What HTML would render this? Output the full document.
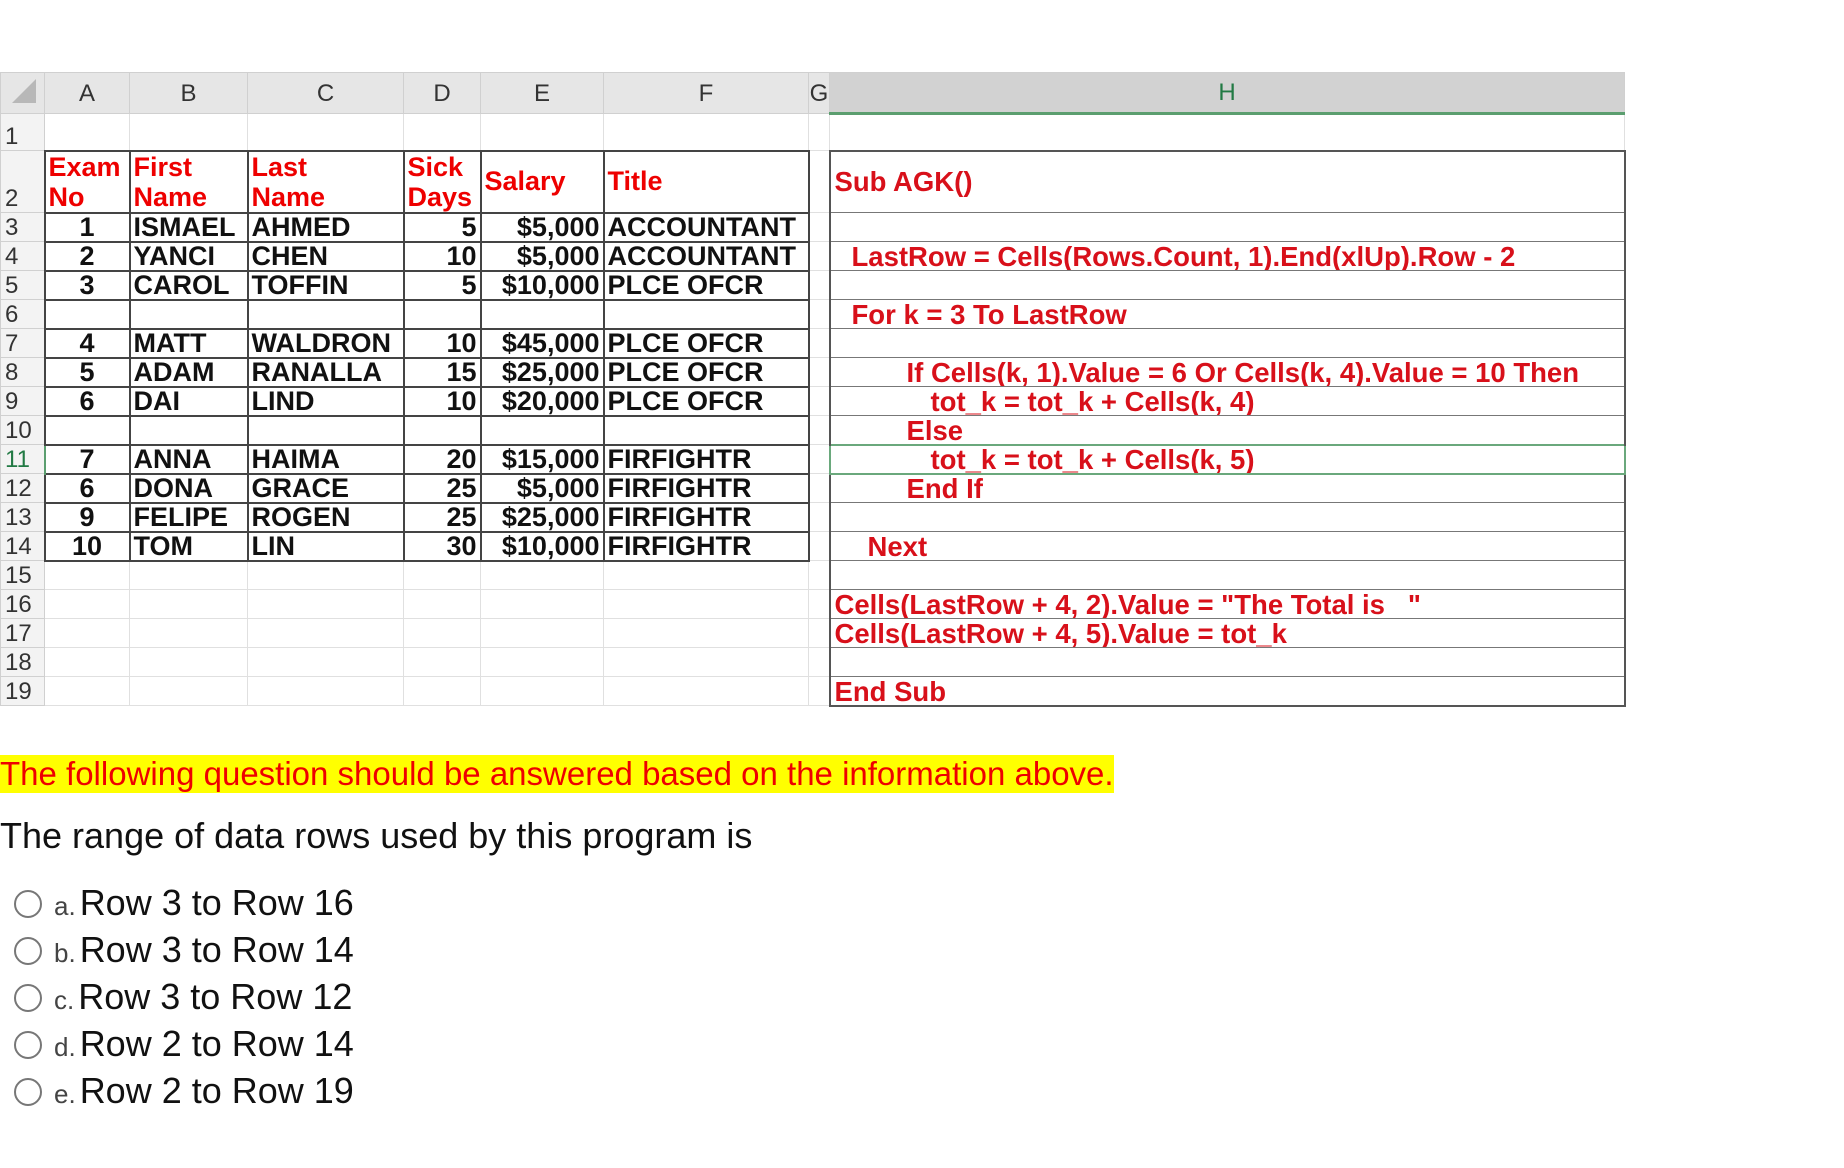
<!DOCTYPE html>
<html><head><meta charset="utf-8"><style>
body{margin:0;width:1844px;height:1168px;background:#fff;overflow:hidden;font-family:"Liberation Sans",Arial,sans-serif;position:relative}
table{position:absolute;left:0;top:72px;border-collapse:collapse;table-layout:fixed}
td{padding:0 3px;border:1px solid #e0e0e0;font-weight:bold;font-size:27px;color:#111;white-space:nowrap;overflow:hidden;vertical-align:bottom;line-height:27px}
tr.hd td{background:#e6e6e6;font-weight:normal;font-size:24px;color:#333;text-align:center;vertical-align:middle;border-color:#d0d0d0}
td.rh{background:#f3f3f3;font-weight:normal;font-size:24px;color:#333;text-align:left;padding-left:4px;border-color:#d0d0d0}
.d{border:2px solid #444}
.r{color:#e00;}
.c{text-align:center}.rt{text-align:right}
.h{border-left:2px solid #555;border-right:2px solid #555;border-top:1px solid #777;border-bottom:1px solid #777;color:#d8101a;font-size:27.5px}
.hdH{background:#d2d2d2 !important;color:#227a44 !important;border-bottom:3px solid #5b9e6f !important}
.o{height:47px;line-height:47px}
.rb{display:inline-block;width:24px;height:24px;border:2px solid #777;border-radius:50%;vertical-align:-3px;margin-right:12px}
.l{font-size:26px;color:#444;margin-right:4px}
</style></head><body>
<table>
<colgroup><col style="width:44px"><col style="width:85px"><col style="width:118px"><col style="width:156px"><col style="width:77px"><col style="width:123px"><col style="width:205px"><col style="width:21px"><col style="width:795px"></colgroup>
<tr class="hd" style="height:41px"><td style="background:#e6e6e6"><svg width="30" height="30"><polygon points="28,4 28,28 4,28" fill="#b8b8b8"/></svg></td><td>A</td><td>B</td><td>C</td><td>D</td><td>E</td><td>F</td><td style="padding:0">G</td><td class="hdH">H</td></tr>
<tr style="height:37px"><td class="rh">1</td><td></td><td></td><td></td><td></td><td></td><td></td><td></td><td></td></tr>
<tr style="height:62px"><td class="rh">2</td><td class="d r" style="line-height:30px">Exam<br>No</td><td class="d r" style="line-height:30px">First<br>Name</td><td class="d r" style="line-height:30px">Last<br>Name</td><td class="d r" style="line-height:30px">Sick<br>Days</td><td class="d r" style="vertical-align:middle">Salary</td><td class="d r" style="vertical-align:middle">Title</td><td></td><td class="h" style="border-top:2px solid #555;vertical-align:middle;padding-left:4px">Sub AGK()</td></tr>
<tr style="height:29px"><td class="rh">3</td><td class="d c">1</td><td class="d">ISMAEL</td><td class="d">AHMED</td><td class="d rt">5</td><td class="d rt">$5,000</td><td class="d">ACCOUNTANT</td><td></td><td class="h"></td></tr>
<tr style="height:29px"><td class="rh">4</td><td class="d c">2</td><td class="d">YANCI</td><td class="d">CHEN</td><td class="d rt">10</td><td class="d rt">$5,000</td><td class="d">ACCOUNTANT</td><td></td><td class="h" style="padding-left:21px">LastRow = Cells(Rows.Count, 1).End(xlUp).Row - 2</td></tr>
<tr style="height:29px"><td class="rh">5</td><td class="d c">3</td><td class="d">CAROL</td><td class="d">TOFFIN</td><td class="d rt">5</td><td class="d rt">$10,000</td><td class="d">PLCE OFCR</td><td></td><td class="h"></td></tr>
<tr style="height:29px"><td class="rh">6</td><td class="d"></td><td class="d"></td><td class="d"></td><td class="d"></td><td class="d"></td><td class="d"></td><td></td><td class="h" style="padding-left:21px">For k = 3 To LastRow</td></tr>
<tr style="height:29px"><td class="rh">7</td><td class="d c">4</td><td class="d">MATT</td><td class="d">WALDRON</td><td class="d rt">10</td><td class="d rt">$45,000</td><td class="d">PLCE OFCR</td><td></td><td class="h"></td></tr>
<tr style="height:29px"><td class="rh">8</td><td class="d c">5</td><td class="d">ADAM</td><td class="d">RANALLA</td><td class="d rt">15</td><td class="d rt">$25,000</td><td class="d">PLCE OFCR</td><td></td><td class="h" style="padding-left:76px">If Cells(k, 1).Value = 6 Or Cells(k, 4).Value = 10 Then</td></tr>
<tr style="height:29px"><td class="rh">9</td><td class="d c">6</td><td class="d">DAI</td><td class="d">LIND</td><td class="d rt">10</td><td class="d rt">$20,000</td><td class="d">PLCE OFCR</td><td></td><td class="h" style="padding-left:100px">tot_k = tot_k + Cells(k, 4)</td></tr>
<tr style="height:29px"><td class="rh">10</td><td class="d"></td><td class="d"></td><td class="d"></td><td class="d"></td><td class="d"></td><td class="d"></td><td></td><td class="h" style="padding-left:76px">Else</td></tr>
<tr style="height:29px"><td class="rh" style="color:#227a44;border-right:2px solid #5b9e6f">11</td><td class="d c">7</td><td class="d">ANNA</td><td class="d">HAIMA</td><td class="d rt">20</td><td class="d rt">$15,000</td><td class="d">FIRFIGHTR</td><td></td><td class="h" style="padding-left:100px;border:2px solid #6aa87c">tot_k = tot_k + Cells(k, 5)</td></tr>
<tr style="height:29px"><td class="rh">12</td><td class="d c">6</td><td class="d">DONA</td><td class="d">GRACE</td><td class="d rt">25</td><td class="d rt">$5,000</td><td class="d">FIRFIGHTR</td><td></td><td class="h" style="padding-left:76px">End If</td></tr>
<tr style="height:29px"><td class="rh">13</td><td class="d c">9</td><td class="d">FELIPE</td><td class="d">ROGEN</td><td class="d rt">25</td><td class="d rt">$25,000</td><td class="d">FIRFIGHTR</td><td></td><td class="h"></td></tr>
<tr style="height:29px"><td class="rh">14</td><td class="d c">10</td><td class="d">TOM</td><td class="d">LIN</td><td class="d rt">30</td><td class="d rt">$10,000</td><td class="d">FIRFIGHTR</td><td></td><td class="h" style="padding-left:37px">Next</td></tr>
<tr style="height:29px"><td class="rh">15</td><td></td><td></td><td></td><td></td><td></td><td></td><td></td><td class="h"></td></tr>
<tr style="height:29px"><td class="rh">16</td><td></td><td></td><td></td><td></td><td></td><td></td><td></td><td class="h" style="padding-left:4px">Cells(LastRow + 4, 2).Value = "The Total is &nbsp;&nbsp;"</td></tr>
<tr style="height:29px"><td class="rh">17</td><td></td><td></td><td></td><td></td><td></td><td></td><td></td><td class="h" style="padding-left:4px">Cells(LastRow + 4, 5).Value = tot_k</td></tr>
<tr style="height:29px"><td class="rh">18</td><td></td><td></td><td></td><td></td><td></td><td></td><td></td><td class="h"></td></tr>
<tr style="height:29px"><td class="rh">19</td><td></td><td></td><td></td><td></td><td></td><td></td><td></td><td class="h" style="padding-left:4px;border-bottom:2px solid #555">End Sub</td></tr>
</table>
<div style="position:absolute;left:0;top:755px;height:38px;width:1114px;background:#ffff00;color:#e00;font-size:33px;line-height:38px;white-space:nowrap">The following question should be answered based on the information above.</div>
<div style="position:absolute;left:0;top:814px;font-size:36px;line-height:44px;color:#111;white-space:nowrap">The range of data rows used by this program is</div>
<div style="position:absolute;left:14px;top:879px;font-size:36px;color:#111;white-space:nowrap">
<div class="o"><span class="rb"></span><span class="l">a.</span>Row 3 to Row 16</div>
<div class="o"><span class="rb"></span><span class="l">b.</span>Row 3 to Row 14</div>
<div class="o"><span class="rb"></span><span class="l">c.</span>Row 3 to Row 12</div>
<div class="o"><span class="rb"></span><span class="l">d.</span>Row 2 to Row 14</div>
<div class="o"><span class="rb"></span><span class="l">e.</span>Row 2 to Row 19</div>
</div>
</body></html>
